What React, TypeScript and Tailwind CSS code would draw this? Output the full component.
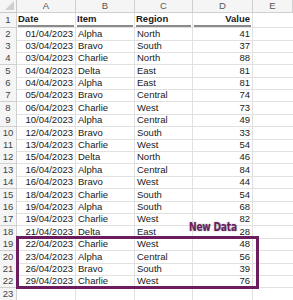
const rows: [string, string, string, number][] = [
  ['01/04/2023', 'Alpha', 'North', 41],
  ['03/04/2023', 'Bravo', 'South', 37],
  ['03/04/2023', 'Charlie', 'North', 88],
  ['04/04/2023', 'Delta', 'East', 81],
  ['04/04/2023', 'Alpha', 'East', 81],
  ['05/04/2023', 'Bravo', 'Central', 74],
  ['06/04/2023', 'Charlie', 'West', 73],
  ['10/04/2023', 'Alpha', 'Central', 49],
  ['12/04/2023', 'Bravo', 'South', 33],
  ['13/04/2023', 'Charlie', 'West', 54],
  ['15/04/2023', 'Delta', 'North', 46],
  ['16/04/2023', 'Alpha', 'Central', 84],
  ['16/04/2023', 'Bravo', 'West', 44],
  ['18/04/2023', 'Charlie', 'South', 54],
  ['19/04/2023', 'Alpha', 'South', 68],
  ['19/04/2023', 'Charlie', 'West', 82],
  ['21/04/2023', 'Delta', 'East', 28],
  ['22/04/2023', 'Charlie', 'West', 48],
  ['23/04/2023', 'Alpha', 'Central', 56],
  ['26/04/2023', 'Bravo', 'South', 39],
  ['29/04/2023', 'Charlie', 'West', 76],
];

const cols = 'grid grid-cols-[17px_59px_59px_58px_60px_1fr]';
const cell = 'border-r border-b border-[#e1e1e1] px-[2px] leading-[12px] truncate';
const rowNum = 'border-r border-b border-[#d0d0d0] bg-[#f5f5f5] text-center text-[#444]';

const App = () => {
  return (
    <div className="relative w-[293px] h-[300px] overflow-hidden bg-white text-[9.5px] text-[#1a1a1a] font-['Liberation_Sans',Arial,sans-serif]">
      {/* column letters */}
      <div className={`${cols} h-[13px] text-[#555] bg-[#f5f5f5]`}>
        <div className="relative border-r border-b border-[#c8c8c8]">
          <div className="absolute right-[2px] bottom-[2px] w-0 h-0 border-l-[9px] border-l-transparent border-b-[9px] border-b-[#cfcfcf]" />
        </div>
        {['A', 'B', 'C', 'D', 'E'].map((c) => (
          <div key={c} className="border-r border-b border-[#d0d0d0] text-center leading-[12px]">
            {c}
          </div>
        ))}
      </div>

      {/* header row */}
      <div className={`${cols} h-[14.5px]`}>
        <div className={`${rowNum} leading-[14px]`}>1</div>
        {['Date', 'Item', 'Region'].map((h) => (
          <div key={h} className="border-r border-b border-[#e1e1e1] px-[1px] pt-[1px]">
            <div className="border-b-2 border-[#8a8a8a] font-bold leading-[10px] pb-[1px]">{h}</div>
          </div>
        ))}
        <div className="border-r border-b border-[#e1e1e1] px-[1px] pt-[1px]">
          <div className="border-b-2 border-[#8a8a8a] font-bold leading-[10px] pb-[1px] text-right pr-[1px]">Value</div>
        </div>
        <div className="border-b border-[#e1e1e1]" />
      </div>

      {rows.map(([d, item, region, v], i) => (
        <div key={i} className={`${cols} h-[12.4px]`}>
          <div className={`${rowNum} leading-[12px]`}>{i + 2}</div>
          <div className={`${cell} text-right`}>{d}</div>
          <div className={cell}>{item}</div>
          <div className={cell}>{region}</div>
          <div className={`${cell} text-right`}>{v}</div>
          <div className="border-b border-[#e1e1e1]" />
        </div>
      ))}
      <div className={`${cols} h-[12.4px]`}>
        <div className={`${rowNum} leading-[12px]`}>23</div>
        <div className={cell} />
        <div className={cell} />
        <div className={cell} />
        <div className={cell} />
        <div className="border-b border-[#e1e1e1]" />
      </div>

      {/* highlight box */}
      <div className="absolute left-[16px] top-[236px] w-[243px] h-[53px] border-[3px] border-[#6b1d5f]" />
      <div className="absolute left-[189px] top-[219px] origin-left scale-x-[0.78] text-[13px] leading-[15px] font-bold text-[#6b1d5f] font-['DejaVu_Sans_Condensed','Liberation_Sans_Narrow',sans-serif] tracking-[-0.3px] [text-shadow:0_0_2px_rgba(0,0,0,0.35)]">
        New Data
      </div>
    </div>
  );
};

export default App;
